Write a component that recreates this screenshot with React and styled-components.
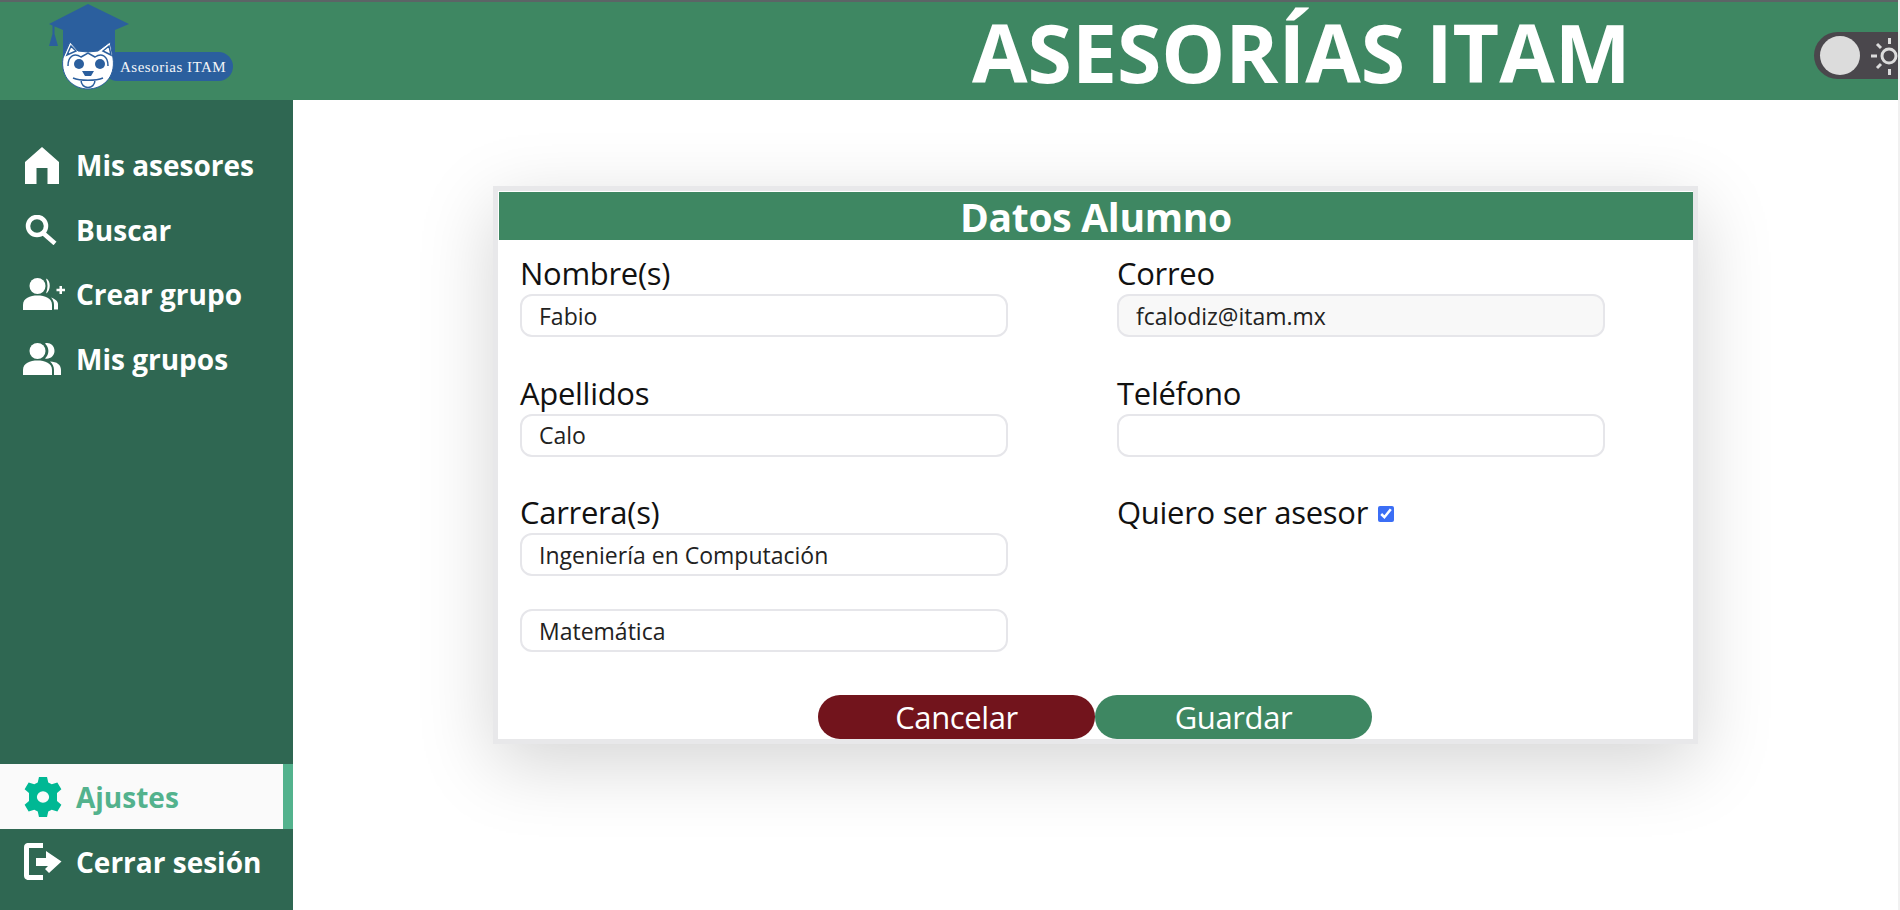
import React from "react";
import styled, { createGlobalStyle } from "styled-components";

const Global = createGlobalStyle`
  html, body { margin: 0; padding: 0; height: 100%; overflow: hidden; background: #fff; }
  #root { height: 100%; }
  * { box-sizing: border-box; }
  body { font-family: "Open Sans", "Noto Sans", sans-serif; }
`;

const Page = styled.div`
  height: 910px; width: 1900px; display: flex; flex-direction: column; overflow: hidden;
  border-right: 2px solid #f1f1f1;
`;
const Header = styled.header`
  height: 100px; flex: none; display: flex; align-items: center; background: #3e8762;
  border-top: 2px solid #5c6466; padding-left: 48px;
`;
const Title = styled.h1`
  margin: 2px 0 0 729px; color: #fff; font-size: 80.5px; font-weight: 700; line-height: 96px; white-space: nowrap;
  flex: none;
`;
const Toggle = styled.div`
  flex: none; margin-left: auto; margin-top: 9px; width: 84px; height: 47px; border-radius: 24px 0 0 24px;
  background: #4a474c; display: flex; align-items: center; padding-left: 6px; gap: 11px; overflow: hidden;
`;
const Knob = styled.span`
  width: 40px; height: 39px; border-radius: 50%; background: #dcdcdc; flex: none;
`;
const Body = styled.div`
  flex: 1; display: flex; min-height: 0;
`;
const Sidebar = styled.nav`
  width: 293px; flex: none; background: #2f6752; display: flex; flex-direction: column; padding: 33px 0 16px;
`;
const Spacer = styled.div`flex: 1;`;
const NavItem = styled.a`
  height: ${p => p.$h || 65}px; display: flex; align-items: center; padding-left: 25px; color: ${p => p.$active ? "#53b28d" : "#fff"};
  background: ${p => p.$active ? "#fafafa" : "transparent"}; font-size: 28px; font-weight: 700;
  border-right: ${p => p.$active ? "10px solid #53b28d" : "0"};
`;
const IconBox = styled.span`
  width: 51px; flex: none; display: flex; align-items: center; color: ${p => p.$color || "inherit"};
`;
const Main = styled.main`
  flex: 1; min-width: 0; padding: 86px 0 0 200px;
`;
const Card = styled.section`
  width: 1205px; height: 558px; border: 5px solid #e8e8ea; background: #fff;
  box-shadow: 0 20px 70px rgba(0,0,0,.17); display: flex; flex-direction: column;
`;
const CardTitle = styled.h2`
  margin: 0 0 0 1px; height: 49px; flex: none; background: #3e8762; color: #fff; text-align: center; font-size: 39px;
  font-weight: 700; line-height: 50px; letter-spacing: -0.3px; border-top: 1px solid #fff;
`;
const Columns = styled.div`
  display: grid; grid-template-columns: 597px 1fr; padding: 14px 0 0 22px; flex: 1;
`;
const Column = styled.div`
  display: flex; flex-direction: column;
`;
const Field = styled.div`
  display: flex; flex-direction: column; width: 488px; margin-bottom: ${p => p.$mb ?? 36.5}px;
`;
const Label = styled.label`
  font-size: 31px; line-height: 38px; height: 40px; padding-bottom: 2px; color: #111; font-weight: 400; letter-spacing: -0.3px;
  display: flex; align-items: center; gap: 10px; white-space: nowrap;
`;
const Input = styled.input`
  width: 488px; height: 43px; border: 2px solid #e6e6ea; border-radius: 12px; padding: 0 17px;
  font: 400 23px "Open Sans", sans-serif; letter-spacing: 0; color: #222; background: ${p => p.readOnly ? "#f8f8f8" : "#fff"};
  outline: none;
`;
const Check = styled.input`
  width: 16px; height: 16px; margin: 4px 0 0 0; accent-color: #3b6ef5;
`;
const Actions = styled.div`
  display: flex; justify-content: center; margin: 0 0 0 2px; padding-right: 3px; flex: none;
`;
const Button = styled.button`
  width: 277px; height: 44px; border: 0; border-radius: 22px; color: #fff; background: ${p => p.$bg};
  font: 400 31px "Open Sans", sans-serif; letter-spacing: -0.4px; padding: 0; line-height: 44px;
`;

const HomeIcon = () => (
  <svg width="34" height="37" viewBox="0 0 34 37" fill="currentColor"><path d="M17 0 L34 15 V37 H22.500 V21 H11.500 V37 H0 V15 Z" /></svg>
);
const SearchIcon = () => (
  <svg width="32" height="30" viewBox="0 0 32 30" fill="none" stroke="currentColor" strokeWidth="4.500"><circle cx="12" cy="11" r="9" /><path d="M18 18 L30 28.500" /></svg>
);
const PeopleIcon = ({ add }) => (
  <svg width="42" height="32" viewBox="0 0 42 32" fill="currentColor" style={{ marginLeft: -2 }}>
    <circle cx="14.500" cy="8" r="8" />
    <path d="M0 32 V27 C0 20 7 17.500 14.500 17.500 C22 17.500 29 20 29 27 V32 Z" />
    {add ? (
      <>
        <path d="M23 .5 C28 2 28 13 23 15.500 C25 10 25 6 23 .5 Z" />
        <path d="M31 31.500 V27 C31 24 30 21.500 28 19.500 C32 21 35 23 35 26 V31.500 Z" />
        <path d="M36.500 8 H39 V10.700 H42 V13.200 H39 V16 H36.500 V13.200 H33.500 V10.700 H36.500 Z" />
      </>
    ) : (
      <>
        <path d="M22 .5 C26 -1 31.500 2 31.500 8 C31.500 13 27 16.500 22 15.500 C26.500 11 26.500 5 22 .5 Z" />
        <path d="M31 32 V27 C31 23.500 29.500 20.500 27 18.500 C34 18.500 38 22 38 27 V32 Z" />
      </>
    )}
  </svg>
);
const GearIcon = () => (
  <svg width="42" height="40" viewBox="0 0 24 24" preserveAspectRatio="none" fill="currentColor" style={{ marginLeft: -3, marginTop: 1 }}>
    <path fillRule="evenodd" d="M9.700 0 H14.300 L15 3.300 L17 4.400 L20.200 3.300 L22.500 7.300 L20 9.600 V12 V14.400 L22.500 16.700 L20.200 20.700 L17 19.600 L15 20.700 L14.300 24 H9.700 L9 20.700 L7 19.600 L3.800 20.700 L1.500 16.700 L4 14.400 V9.600 L1.500 7.300 L3.800 3.300 L7 4.400 L9 3.300 Z M12 8.500 A3.500 3.500 0 1 0 12 15.500 A3.500 3.500 0 1 0 12 8.500 Z" />
  </svg>
);
const LogoutIcon = () => (
  <svg width="38" height="37" viewBox="0 0 38 37" fill="none" style={{ marginLeft: -1 }}>
    <path d="M19 2.500 H4 A2 2 0 0 0 2.500 4.500 V32.500 A2 2 0 0 0 4 34.500 H19" stroke="currentColor" strokeWidth="5" />
    <path d="M12 15 H22 V8 L37.500 18.500 L25 30 L21 26 L24 23 H12 Z" fill="currentColor" />
  </svg>
);
const SunIcon = () => (
  <svg width="27" height="40" viewBox="0 0 27 40" fill="none" stroke="#dcdcdc" strokeWidth="3" style={{ flex: "none" }}>
    <circle cx="18" cy="20" r="7" />
    <path d="M18.500 2 V8 M18.500 33 V39 M0 20 H6 M6 8 L10 12 M6 32 L10 28" />
  </svg>
);
const Logo = () => (
  <svg width="195" height="91" viewBox="0 0 195 91" style={{ flex: "none", alignSelf: "flex-start", marginTop: -2 }}>
    <rect x="55" y="52" width="130" height="29" rx="14.500" fill="#2b5f9e" />
    <path d="M40 4 L81 24 L67 30 V72 H15 V30 L1 24 Z" fill="#2b5f9e" />
    <path d="M4.500 25 H6.500 V34 L10 46 H1 L4.500 34 Z" fill="#2b5f9e" />
    <path d="M22 42 L30 51 L40 52 L50 51 L62 42 L65 58 C68 78 54 89 40 89 C26 89 12 78 15 58 Z" fill="#fff" stroke="#2b5f9e" strokeWidth="1" />
    <path d="M23 46 L28 51 L19 55 Z M61 46 L55 51 L63 55 Z" fill="#fff" stroke="#2b5f9e" strokeWidth="1.500" />
    <path d="M20 66 C20 55 27 53 33 57 L40 53 L47 57 C53 53 60 55 60 66" fill="none" stroke="#2b5f9e" strokeWidth="1.500" />
    <circle cx="31" cy="64" r="5" fill="#2b5f9e" /><circle cx="52" cy="64" r="5" fill="#2b5f9e" />
    <path d="M34 71 H46 L43 76 H37 Z" fill="#2b5f9e" />
    <path d="M25 78 C32 81 48 81 55 78 M33 80 C33 90 47 90 47 80" fill="none" stroke="#2b5f9e" strokeWidth="1.500" />
    <text x="72" y="71.500" fill="#f3f5f8" fontFamily="Liberation Serif, serif" fontSize="15" letterSpacing=".5">Asesorias ITAM</text>
  </svg>
);

export default function App() {
  return (
    <Page>
      <Global />
      <Header>
        <Logo />
        <Title>ASESORÍAS ITAM</Title>
        <Toggle><Knob /><SunIcon /></Toggle>
      </Header>
      <Body>
        <Sidebar>
          <NavItem $h={64.5}><IconBox><HomeIcon /></IconBox>Mis asesores</NavItem>
          <NavItem $h={64.5}><IconBox><SearchIcon /></IconBox>Buscar</NavItem>
          <NavItem $h={64.5}><IconBox><PeopleIcon add /></IconBox>Crear grupo</NavItem>
          <NavItem $h={64.5}><IconBox><PeopleIcon /></IconBox>Mis grupos</NavItem>
          <Spacer />
          <NavItem $active><IconBox $color="#00b894"><GearIcon /></IconBox>Ajustes</NavItem>
          <NavItem><IconBox><LogoutIcon /></IconBox>Cerrar sesión</NavItem>
        </Sidebar>
        <Main>
          <Card>
            <CardTitle>Datos Alumno</CardTitle>
            <Columns>
              <Column>
                <Field><Label>Nombre(s)</Label><Input defaultValue="Fabio" /></Field>
                <Field><Label>Apellidos</Label><Input defaultValue="Calo" /></Field>
                <Field $mb={33}><Label>Carrera(s)</Label><Input defaultValue="Ingeniería en Computación" /></Field>
                <Field $mb={0}><Input defaultValue="Matemática" /></Field>
              </Column>
              <Column>
                <Field><Label>Correo</Label><Input readOnly defaultValue="fcalodiz@itam.mx" /></Field>
                <Field><Label>Teléfono</Label><Input /></Field>
                <Field><Label>Quiero ser asesor <Check type="checkbox" defaultChecked /></Label></Field>
              </Column>
            </Columns>
            <Actions>
              <Button $bg="#72141c">Cancelar</Button>
              <Button $bg="#3e8762">Guardar</Button>
            </Actions>
          </Card>
        </Main>
      </Body>
    </Page>
  );
}
